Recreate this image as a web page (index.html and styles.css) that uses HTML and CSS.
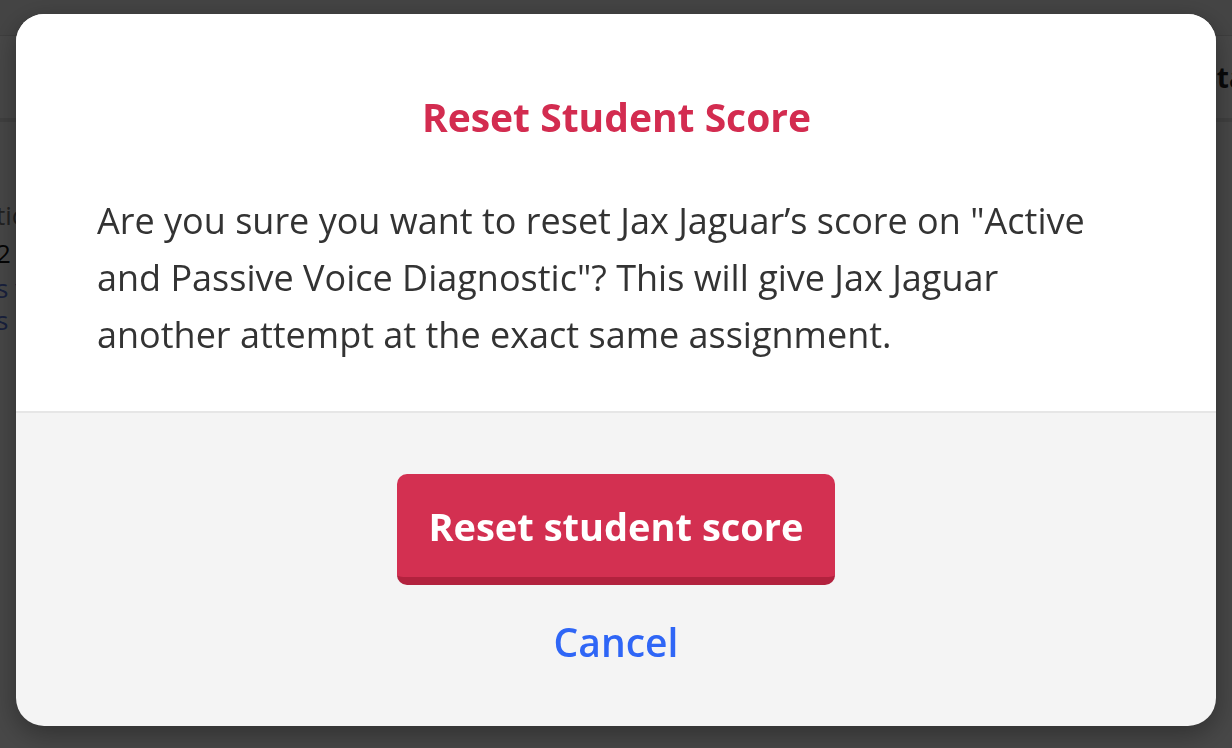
FILE: index.html
```html
<!DOCTYPE html>
<html lang="en">
<head>
  <meta charset="UTF-8">
  <title>Activity Summary</title>
  <link rel="stylesheet" href="styles.css">
</head>
<body>

  <!-- page behind the dialog -->
  <div class="topbar"></div>
  <nav class="subnav">
    <span class="subnav-item">Stats</span>
  </nav>

  <main class="page">
    <div class="activity">
      <p class="activity-name">tio</p>
      <p class="activity-count">2</p>
      <a class="activity-link" href="#">s v</a>
      <a class="activity-link" href="#">s</a>
    </div>

    <div class="avatars">
      <span class="avatar"></span>
      <span class="avatar"></span>
      <span class="avatar"></span>
      <span class="avatar"></span>
      <span class="avatar"></span>
      <span class="avatar"></span>
    </div>
  </main>

  <!-- reset score dialog -->
  <div class="overlay">
    <div class="modal">
      <div class="modal-body">
        <h2 class="modal-title">Reset Student Score</h2>
        <p class="modal-text">Are you sure you want to reset Jax Jaguar’s score on "Active and Passive Voice Diagnostic"? This will give Jax Jaguar another attempt at the exact same assignment.</p>
      </div>
      <div class="modal-footer">
        <button class="btn-reset">Reset student score</button>
        <button class="btn-cancel">Cancel</button>
      </div>
    </div>
  </div>

</body>
</html>
```

FILE: styles.css
```css
body {
  margin: 0;
  font-family: "Open Sans", "Noto Sans", sans-serif;
  color: #333;
  background-color: #fff;
  height: 748px;
  overflow: hidden;
}

/* background page */
.topbar {
  height: 35px;
  background-color: #f3f3f3;
  border-bottom: 1px solid #dcdcdc;
}

.subnav {
  height: 82px;
  border-bottom: 4px solid #e4e4e4;
  display: flex;
  justify-content: flex-end;
  align-items: center;
}

.subnav-item {
  font-size: 28px;
  font-weight: 700;
  color: #222;
  margin-right: -40px;
}

.page {
  padding: 74px 0 0 0;
}

.activity {
  display: flex;
  flex-direction: column;
  margin-left: -4px;
}

.activity-name,
.activity-count {
  margin: 0;
  font-size: 26px;
  line-height: 38px;
  color: #777;
}

.activity-count {
  color: #111;
}

.activity-link {
  font-size: 26px;
  line-height: 32px;
  color: #5a74d8;
  text-decoration: none;
}

.avatars {
  display: flex;
  gap: 150px;
  padding-left: 133px;
  margin-top: 338px;
}

.avatar {
  width: 40px;
  height: 40px;
  border-radius: 50%;
  background-color: #9a9a9a;
}

/* dialog */
.overlay {
  position: fixed;
  inset: 0;
  background-color: rgba(0, 0, 0, 0.72);
  display: flex;
  justify-content: center;
  align-items: flex-start;
  padding-top: 14px;
}

.modal {
  width: 1200px;
  height: 712px;
  border-radius: 28px;
  overflow: hidden;
  background-color: #f4f4f4;
  box-shadow: 0 8px 28px rgba(0, 0, 0, 0.35);
  display: flex;
  flex-direction: column;
}

.modal-body {
  background-color: #fff;
  padding: 81px 80px 48px 81px;
  border-bottom: 2px solid #e6e6e6;
}

.modal-title {
  margin: 0 0 53px;
  text-align: center;
  font-size: 39px;
  line-height: 44px;
  font-weight: 700;
  color: #d32c50;
}

.modal-text {
  margin: 0;
  font-size: 36px;
  line-height: 57px;
  color: #333;
}

.modal-footer {
  flex: 1;
  display: flex;
  flex-direction: column;
  align-items: center;
  padding-top: 61px;
}

.btn-reset {
  width: 438px;
  height: 111px;
  background-color: #d33051;
  border: none;
  border-bottom: 8px solid #b2223e;
  border-radius: 10px;
  color: #fff;
  font-family: inherit;
  font-size: 38px;
  font-weight: 700;
  cursor: pointer;
}

.btn-cancel {
  margin-top: 35px;
  background: none;
  border: none;
  padding: 0;
  font-family: inherit;
  font-size: 39px;
  line-height: 44px;
  font-weight: 600;
  color: #2f66f6;
  cursor: pointer;
}
```
